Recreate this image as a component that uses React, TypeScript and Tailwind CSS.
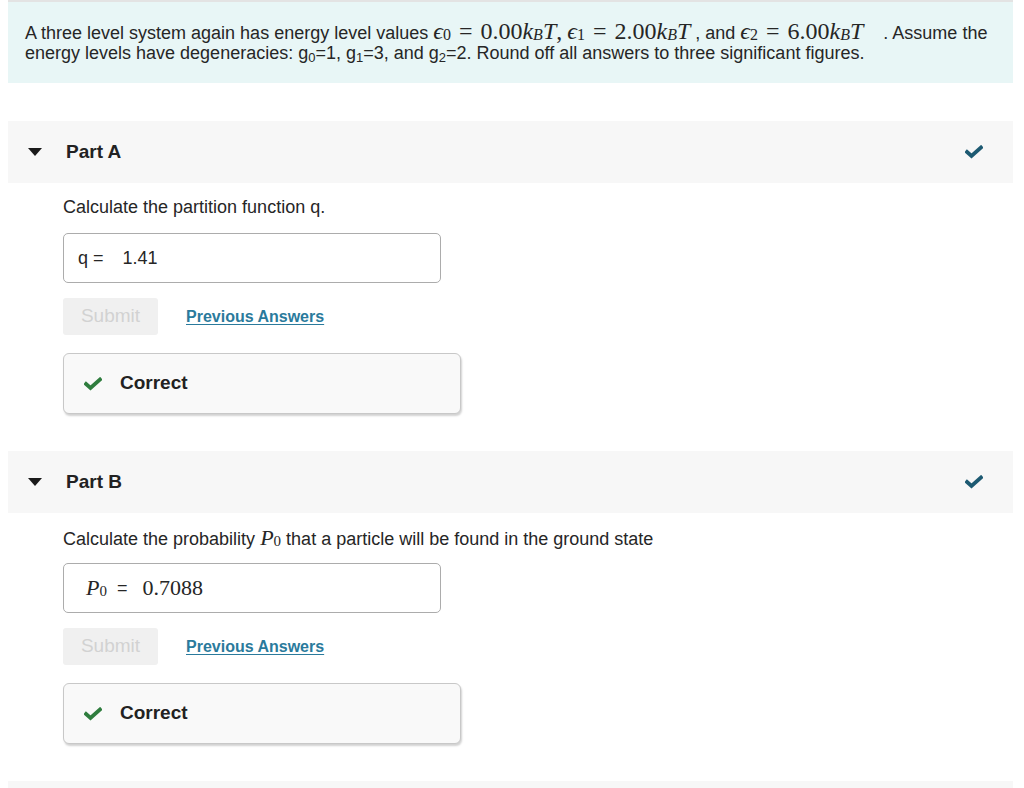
import React from "react";

const M: React.FC<{ children: React.ReactNode; className?: string }> = ({ children, className }) => (
  <span className={"font-['Liberation_Serif','Times_New_Roman',serif] leading-none " + (className ?? "")}>{children}</span>
);

const Eps: React.FC<{ i: string; v: string }> = ({ i, v }) => (
  <M className="text-[24px] whitespace-nowrap">
    <span className="italic">ϵ</span>
    <sub className="text-[16px] not-italic relative top-[1px]">{i}</sub>
    <span className="mx-[8px]">=</span>
    {v}
    <span className="italic">k</span>
    <sub className="text-[16px] italic relative top-[1px]">B</sub>
    <span className="italic">T</span>
  </M>
);

const Tri = () => (
  <svg width="14" height="8" viewBox="0 0 14 8">
    <polygon points="0,0 14,0 7,8" fill="#1a1a1a" />
  </svg>
);

const Check: React.FC<{ color: string }> = ({ color }) => (
  <svg width="18" height="14" viewBox="0 0 18 14">
    <polyline points="2,7 6.5,11 16,2.5" fill="none" stroke={color} strokeWidth="3.8" strokeLinecap="square" />
  </svg>
);

const Header: React.FC<{ title: string }> = ({ title }) => (
  <div className="h-[62px] bg-[#f7f7f7] flex items-center pr-[30px]">
    <div className="w-[58px] pl-[20px] flex items-center">
      <Tri />
    </div>
    <div className="font-bold text-[19px] text-[#222] flex-1">{title}</div>
    <Check color="#1d5a72" />
  </div>
);

const Actions = () => (
  <>
    <div className="mt-[15px] flex items-center">
      <div className="w-[95px] h-[37px] bg-[#f0f0f0] rounded-[3px] text-[#d2d2d2] text-[19px] flex items-center justify-center">
        Submit
      </div>
      <a className="ml-[28px] text-[16px] font-bold text-[#2a7a9c] underline underline-offset-[2px]">Previous Answers</a>
    </div>
    <div className="mt-[18px] w-[398px] h-[61px] border border-[#c8c8c8] rounded-[6px] bg-[#f9f9f9] shadow-[1px_2px_2px_rgba(0,0,0,0.18)] flex items-center pl-[20px]">
      <Check color="#2f7d3e" />
      <span className="ml-[18px] font-bold text-[19px] text-[#222]">Correct</span>
    </div>
  </>
);

export default function App() {
  return (
    <div className="w-[1024px] h-[788px] overflow-hidden bg-white font-['Liberation_Sans',Arial,sans-serif] text-[18px] text-[#262626]">
      <div className="ml-[8px] w-[1005px]">
        <div className="border-t-2 border-[#e3e3e3] bg-[#e8f6f6] h-[83px] px-[17px] pt-[17px] leading-[20px]">
          <div className="whitespace-nowrap">
            A three level system again has energy level values <Eps i="0" v="0.00" />
            <M className="text-[24px]">,</M> <Eps i="1" v="2.00" /> , and <Eps i="2" v="6.00" />
            <span className="ml-[20px]">. Assume the</span>
          </div>
          <div className="whitespace-nowrap">
            energy levels have degeneracies: g<sub className="text-[13px]">0</sub>=1, g<sub className="text-[13px]">1</sub>=3, and g
            <sub className="text-[13px]">2</sub>=2. Round off all answers to three significant figures.
          </div>
        </div>

        <div className="mt-[38px]">
          <Header title="Part A" />
          <div className="pl-[55px]">
            <div className="mt-[14px] leading-[20px]">Calculate the partition function q.</div>
            <div className="mt-[16px] h-[50px] w-[378px] border border-[#acacac] rounded-[5px] flex items-center pl-[14px]">
              <span>q =</span>
              <span className="ml-[19px]">1.41</span>
            </div>
            <Actions />
          </div>
        </div>

        <div className="mt-[37px]">
          <Header title="Part B" />
          <div className="pl-[55px]">
            <div className="mt-[14px] h-[20px] leading-[20px] whitespace-nowrap">
              Calculate the probability{" "}
              <M className="text-[22px]">
                <span className="italic">P</span>
                <sub className="text-[15px] relative top-[1px]">0</sub>
              </M>{" "}
              that a particle will be found in the ground state
            </div>
            <div className="mt-[16px] h-[50px] w-[378px] border border-[#acacac] rounded-[5px] flex items-center pl-[22px]">
              <M className="text-[22px]">
                <span className="italic">P</span>
                <sub className="text-[15px] relative top-[1px]">0</sub>
              </M>
              <span className="ml-[10px]">=</span>
              <M className="ml-[15px] text-[22px]">0.7088</M>
            </div>
            <Actions />
          </div>
        </div>

        <div className="mt-[37px] h-[20px] bg-[#f7f7f7]" />
      </div>
    </div>
  );
}
